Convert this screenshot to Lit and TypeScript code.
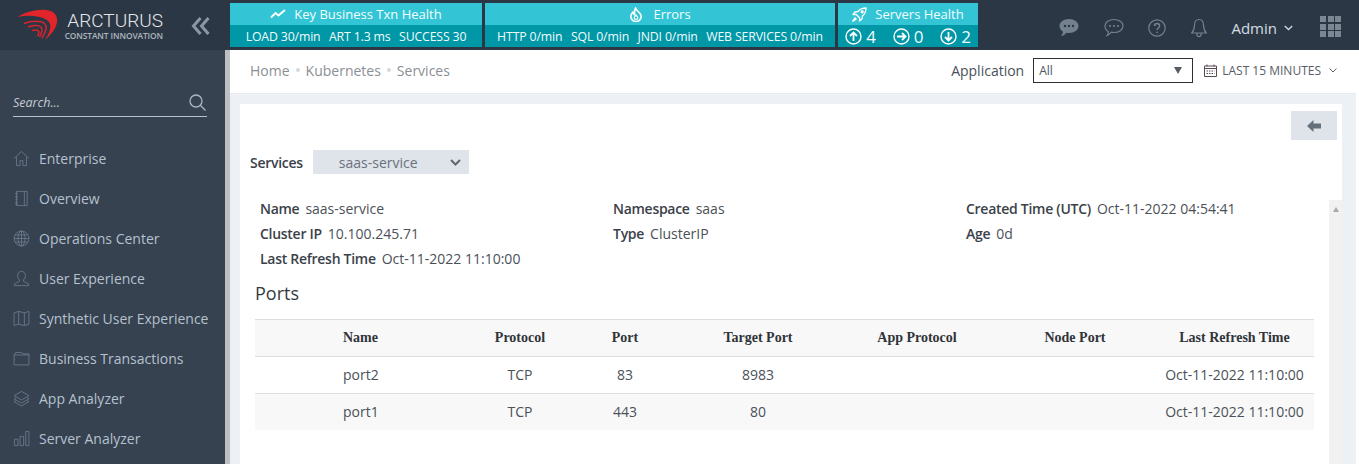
import { LitElement, html, css, svg } from "lit";
import { customElement } from "lit/decorators.js";

const ic = (body: unknown, size = 24, vb = "0 0 24 24") => html`<svg width=${size} height=${size} viewBox=${vb} fill="none" stroke="currentColor" stroke-width="1.2">${body}</svg>`;

const nav: [string, unknown][] = [
  ["Enterprise", svg`<path d="M1.5 12 12 2l10.5 10M5 10v12h5v-7h4v7h5V10"/>`],
  ["Overview", svg`<path d="M5 2h15v20H5zM16 2v20M3 5h4M3 9h4M3 13h4M3 17h4M3 20h4"/>`],
  ["Operations Center", svg`<circle cx="12" cy="12" r="10.5"/><ellipse cx="12" cy="12" rx="5" ry="10.5"/><path d="M12 1.5v21M1.5 12h21M3 7h18M3 17h18"/>`],
  ["User Experience", svg`<path d="M12 2c-3.4 0-5.5 2.4-5.5 5.6 0 3 1.3 5 2.7 6.4v2L2 19.5V22h20v-2.5L14.800 16v-2c1.400-1.400 2.700-3.400 2.700-6.400C17.500 4.400 15.400 2 12 2z"/>`],
  ["Synthetic User Experience", svg`<path d="M1.500 4 8 2l8 2 6.500-2v18L16 22l-8-2-6.500 2zM8 2v18M16 4v18"/>`],
  ["Business Transactions", svg`<path d="M1.500 7V21h21V7zM1.500 7l2-3.500h9L14 5.500h8.500V7M1.500 13h1.500"/>`],
  ["App Analyzer", svg`<path d="M12 2 1.500 8 12 14l10.500-6zM4 11l-2.500 1.500L12 18.500l10.500-6L20 11M4 15l-2.500 1.500L12 22.500l10.500-6L20 15"/>`],
  ["Server Analyzer", svg`<path d="M2 13h5v9H2zM10 9h5v13h-5zM18 2h4.500v20H18z"/>`],
];

const ports = [
  ["port2", "TCP", "83", "8983", "", "", "Oct-11-2022 11:10:00"],
  ["port1", "TCP", "443", "80", "", "", "Oct-11-2022 11:10:00"],
];
const heads = ["Name", "Protocol", "Port", "Target Port", "App Protocol", "Node Port", "Last Refresh Time"];

@customElement("app-root")
export class AppRoot extends LitElement {
  static styles = css`
    :host { display: block; width: 1359px; height: 464px; overflow: hidden; font-family: "Open Sans", sans-serif; color: #3d4650; font-size: 14px; background: #fff; }
    * { box-sizing: border-box; }
    .top { height: 50px; background: #2c3745; display: flex; color: #fff; }
    .brand { width: 230px; display: flex; align-items: center; flex: none; }
    .logo { margin-left: 15px; flex: none; width: 48px; height: 32px; }
    .word { margin-left: 2px; display: flex; flex-direction: column; align-items: flex-end; width: 98px; color: #e4e7ea; }
    .word b { font-family: "Roboto", sans-serif; font-weight: 300; font-size: 19px; line-height: 21px; margin-top: 1px; white-space: nowrap; }
    .word span { font-size: 8.400px; line-height: 10px; white-space: nowrap; font-weight: 600; color: #aeb6bf; letter-spacing: -0.100px; }
    .chev { margin-left: 28px; margin-top: 2px; color: #8b97a5; display: flex; }
    .tiles { display: flex; gap: 3px; padding-top: 3px; }
    .tile { height: 44px; display: flex; flex-direction: column; }
    .t1 { width: 252px; } .t2 { width: 350px; } .t3 { width: 140px; }
    .tt { height: 22px; background: #33c5d5; display: flex; align-items: center; justify-content: center; gap: 8px; font-size: 13px; color: #f4fdfe; }
    .t2 .tt { gap: 10px; }
    .tb { height: 22px; background: #0097a7; display: flex; align-items: center; justify-content: center; gap: 8.500px; font-size: 12.300px; color: #f2fbfc; white-space: nowrap; letter-spacing: -0.150px; }
    .health { gap: 17px; font-size: 17px; }
    .health span { display: flex; align-items: center; gap: 4px; }
    .acts { margin-left: auto; display: flex; align-items: center; color: #73818f; padding: 5px 18px 0 0; }
    .admin { color: #d5dbe2; font-size: 15px; margin: 0 27px 0 0; display: flex; align-items: center; gap: 7px; }
    .waffle { display: grid; grid-template-columns: repeat(3, 6px); gap: 1.500px; margin-top: -2px; }
    .waffle i { width: 6px; height: 6px; background: #7c8794; }
    .i1 { margin-right: 25px; } .i2 { margin-right: 24px; } .i3 { margin-right: 25px; } .i4 { margin-right: 24px; }
    .main { display: flex; height: 414px; }
    .side { width: 225px; flex: none; background: #374250; color: #b4c1cf; }
    .search { margin: 40px 18px 0 13px; height: 27px; border-bottom: 1px solid #b9c2cc; display: flex; align-items: center; justify-content: space-between; font-style: italic; font-size: 12.500px; color: #c4ccd5; padding-bottom: 2px; }
    .search svg { color: #a9b7c6; margin-right: 1px; }
    .navl { margin-top: 21px; display: flex; flex-direction: column; }
    .item { height: 40px; display: flex; align-items: center; gap: 9px; padding-left: 13px; font-size: 14px; white-space: nowrap; }
    .item svg { color: #6b7b8e; flex: none; }
    .gut { width: 5px; background: #bdbfc1; flex: none; }
    .con { flex: 1; min-width: 0; background: #edf0f5; display: flex; flex-direction: column; margin-right: 3px; }
    .crumb { height: 44px; background: #fff; border-bottom: 1px solid #e6e9ee; display: flex; align-items: center; padding: 0 19px 3px 20px; flex: none; }
    .bc { display: flex; align-items: center; gap: 6px; color: #8a8f94; font-size: 14px; }
    .bc i { width: 4px; height: 4px; border-radius: 50%; background: #d5d8dc; }
    .filters { margin-left: auto; display: flex; align-items: center; }
    .filters label { font-size: 14px; color: #4a5059; margin-right: 9px; }
    .sel { width: 160px; height: 25px; border: 1px solid #2d2f33; display: flex; align-items: center; justify-content: space-between; padding: 0 10px 0 5px; font-size: 12px; color: #4d5560; }
    .sel i { width: 0; height: 0; border: 4px solid transparent; border-top: 7px solid #555b63; border-bottom: 0; }
    .range { margin-left: 11px; display: flex; align-items: center; gap: 5px; font-size: 12px; color: #565d66; white-space: nowrap; }
    .card { margin: 10px 14px 0 10px; background: #fff; flex: 1; display: flex; flex-direction: column; position: relative; }
    .tools { height: 36px; display: flex; justify-content: flex-end; padding: 7px 5px 0 0; flex: none; }
    .back { width: 46px; height: 29px; background: #dfe3ea; display: flex; align-items: center; justify-content: center; color: #66707c; }
    .svc { display: flex; align-items: center; gap: 10px; padding: 10px 0 0 10px; height: 34px; flex: none; }
    .svc b { font-weight: 600; font-size: 14px; color: #3b4149; letter-spacing: -0.280px; }
    .dd { width: 156px; height: 24px; background: #dfe3ea; display: flex; align-items: center; justify-content: space-between; padding: 0 8px 0 26px; color: #6a727c; font-size: 14px; }
    .scroll { flex: 1; position: relative; padding: 22px 28px 0 15px; }
    .track { position: absolute; top: 26px; right: 0; bottom: 0; width: 13px; background: #f1f1f1; display: flex; justify-content: center; padding-top: 7px; }
    .track i { width: 0; height: 0; border: 3.500px solid transparent; border-bottom: 5px solid #a9a9a9; border-top: 0; }
    .facts { display: grid; grid-template-columns: 353px 353px 1fr; grid-auto-rows: 25px; padding-left: 5px; }
    .f { display: flex; gap: 6px; align-items: center; white-space: nowrap; color: #4b5158; font-size: 14px; }
    .f b { font-weight: 600; color: #3b4149; letter-spacing: -0.280px; }
    h2 { font-weight: 400; font-size: 18px; line-height: 24px; color: #343a42; margin: 10px 0 0 0; }
    .grid { margin-top: 14px; }
    .row { display: grid; grid-template-columns: 212px 106px 104px 162px 156px 160px 159px; height: 37px; border-top: 1px solid #dedede; align-items: center; text-align: center; font-size: 14px; color: #4b5158; padding-bottom: 2px; }
    .row > :first-child { text-align: left; padding-left: 88px; }
    .row.shade { background: #f8f8f8; }
    .row.head { font-family: "Liberation Serif", serif; font-weight: 700; color: #30343a; font-size: 14px; padding-bottom: 0; }
  `;

  render() {
    return html`
      <div class="top">
        <div class="brand">
          <svg class="logo" viewBox="0 0 48 32">
            <path fill="#e2242b" d="M2.500 8C12 2 28-1.500 37 2.500c8 4.500 7.500 16-7 28.500 6.500-10 7.500-17 1-20.500C24 6.500 12 6 2.500 8z"/>
            <path fill="none" stroke="#d8232a" stroke-width="1.500" d="M9 14.500c8-3 17-3 20.500 0 3.500 3 1 9-2.500 14.500M13 18c6-1.800 11-1.800 13 0 2.500 2.500.5 6.500-1.500 10M17 21.500c3-.8 5.500-.8 6.500.5 1 1.500 0 3.500-1 5"/>
          </svg>
          <div class="word"><b>ARCTURUS</b><span>CONSTANT INNOVATION</span></div>
          <div class="chev"><svg width="20" height="20" viewBox="0 0 20 20" fill="none" stroke="currentColor" stroke-width="3"><path d="M9.500 2 2.500 10l7 8M17.500 2l-7 8 7 8"/></svg></div>
        </div>
        <div class="tiles">
          <div class="tile t1">
            <div class="tt"><svg width="16" height="12" viewBox="0 0 16 12" fill="none" stroke="#fff" stroke-width="2"><path d="M1 9.500 5.500 5l3 2.500L15 2"/></svg><span>Key Business Txn Health</span></div>
            <div class="tb"><span>LOAD 30/min</span><span>ART 1.3 ms</span><span>SUCCESS 30</span></div>
          </div>
          <div class="tile t2">
            <div class="tt"><svg width="14" height="15" viewBox="0 0 14 15" fill="none" stroke="#fff" stroke-width="1.600"><path d="M6.500 1c.5 3 5.700 4.500 5.700 8.300a5.200 5.200 0 0 1-10.400 0C1.800 7.500 2.800 6.200 3.800 5.200c.3 1.500 1 2.200 1.800 2.500C5.300 5 5.500 3 6.500 1z"/><path stroke-width="1.200" d="M7 12.500c-1 0-1.800-.8-1.800-1.700 0-1 1.300-1.800 1.800-2.800.5 1 1.800 1.800 1.800 2.800 0 .9-.8 1.700-1.800 1.700z"/></svg><span>Errors</span></div>
            <div class="tb"><span>HTTP 0/min</span><span>SQL 0/min</span><span>JNDI 0/min</span><span>WEB SERVICES 0/min</span></div>
          </div>
          <div class="tile t3">
            <div class="tt"><svg width="15" height="15" viewBox="0 0 15 15" fill="none" stroke="#fff" stroke-width="1.300" stroke-linejoin="round"><path d="M14 1c-3.500 0-6 1.200-8 3.500L3 5 1 7.500l3-.2 3.700 3.700-.2 3 2.500-2 .5-3C12.800 7 14 4.500 14 1z"/><circle cx="10.200" cy="4.800" r="1" fill="#fff"/><path stroke-width="1.600" d="M3.500 10.500 1 14l3.500-2.500"/></svg><span>Servers Health</span></div>
            <div class="tb health">
              <span><svg width="17" height="17" viewBox="0 0 17 17" fill="none" stroke="#fff" stroke-width="1.400"><circle cx="8.500" cy="8.500" r="7.500"/><path stroke-width="1.800" d="M8.500 13V4.500M5 8l3.500-3.500L12 8"/></svg>4</span>
              <span><svg width="17" height="17" viewBox="0 0 17 17" fill="none" stroke="#fff" stroke-width="1.400"><circle cx="8.500" cy="8.500" r="7.500"/><path stroke-width="1.800" d="M4 8.500h8.500M9 5l3.500 3.500L9 12"/></svg>0</span>
              <span><svg width="17" height="17" viewBox="0 0 17 17" fill="none" stroke="#fff" stroke-width="1.400"><circle cx="8.500" cy="8.500" r="7.500"/><path stroke-width="1.800" d="M8.500 4v8.500M5 9l3.500 3.500L12 9"/></svg>2</span>
            </div>
          </div>
        </div>
        <div class="acts">
          <svg class="i1" width="20" height="19" viewBox="0 0 20 19" fill="currentColor"><path d="M10 1c5.300 0 9.500 3 9.500 7s-4.200 7-9.500 7c-.9 0-1.700-.1-2.500-.3C6 16.300 4 17.700 2 18c1-1.200 1.800-2.600 2-4.200C2 12.500.5 10.400.5 8 .5 4 4.700 1 10 1z"/><g fill="#2c3745"><circle cx="6" cy="8" r="1.200"/><circle cx="10" cy="8" r="1.200"/><circle cx="14" cy="8" r="1.200"/></g></svg>
          <svg class="i2" width="20" height="19" viewBox="0 0 20 19" fill="none" stroke="currentColor" stroke-width="1.200"><path d="M10 1.500c5 0 9 2.800 9 6.500s-4 6.500-9 6.500c-.9 0-1.700-.1-2.500-.3C6 15.800 4.500 17 3 17.500c.8-1 1.300-2.200 1.500-3.800C2.400 12.500 1 10.400 1 8c0-3.700 4-6.500 9-6.500z"/><g fill="currentColor" stroke="none"><circle cx="6" cy="8" r="1.100"/><circle cx="10" cy="8" r="1.100"/><circle cx="14" cy="8" r="1.100"/></g></svg>
          <svg class="i3" width="18" height="18" viewBox="0 0 18 18" fill="none" stroke="currentColor" stroke-width="1.200"><circle cx="9" cy="9" r="8.200"/><path stroke-width="1.500" d="M6.500 7c0-1.500 1-2.500 2.600-2.500S11.600 5.500 11.600 7c0 2-2.500 2-2.500 4"/><circle cx="9.100" cy="13.300" r=".9" fill="currentColor" stroke="none"/></svg>
          <svg class="i4" width="16" height="20" viewBox="0 0 16 20" fill="none" stroke="currentColor" stroke-width="1.200"><path d="M8 1.500c-3 0-4.500 2.500-4.500 5.500 0 4-1 6-2.800 8h14.600c-1.800-2-2.800-4-2.800-8 0-3-1.500-5.500-4.500-5.500zM5.800 15.500c0 2 1 3.200 2.200 3.200s2.200-1.200 2.200-3.200"/></svg>
          <div class="admin">Admin <svg width="9" height="6" viewBox="0 0 9 6" fill="none" stroke="currentColor" stroke-width="1.300"><path d="M.8 1 4.500 4.500 8.200 1"/></svg></div>
          <div class="waffle">${Array.from({ length: 9 }, () => html`<i></i>`)}</div>
        </div>
      </div>
      <div class="main">
        <aside class="side">
          <div class="search"><span>Search...</span>
            <svg width="17" height="17" viewBox="0 0 17 17" fill="none" stroke="currentColor" stroke-width="1.300"><circle cx="7" cy="7" r="6"/><path d="m11.500 11.500 5 5"/></svg>
          </div>
          <nav class="navl">
            ${nav.map(([n, i]) => html`<div class="item">${ic(i, 17)}<span>${n}</span></div>`)}
          </nav>
        </aside>
        <div class="gut"></div>
        <div class="con">
          <div class="crumb">
            <div class="bc"><span>Home</span><i></i><span>Kubernetes</span><i></i><span>Services</span></div>
            <div class="filters">
              <label>Application</label>
              <div class="sel"><span>All</span><i></i></div>
              <div class="range">
                <svg width="13" height="13" viewBox="0 0 13 13" fill="none" stroke="#5a4a55" stroke-width="1"><path d="M.5 2h12v10.500H.5zM.5 4.500h12M3 .5v2M10 .5v2"/><path stroke-dasharray="1.500 1" d="M2.500 7h8M2.500 9.500h8"/></svg>
                LAST 15 MINUTES
                <svg style="margin-left:3px" width="8" height="5" viewBox="0 0 8 5" fill="none" stroke="#666" stroke-width="1"><path d="M.5.500 4 4 7.500.500"/></svg>
              </div>
            </div>
          </div>
          <section class="card">
            <div class="tools"><div class="back"><svg width="14" height="12" viewBox="0 0 14 12" fill="currentColor"><path d="M0 6 6.500 0v3.500H14v5H6.500V12z"/></svg></div></div>
            <div class="svc"><b>Services</b>
              <div class="dd"><span>saas-service</span><svg width="11" height="7" viewBox="0 0 11 7" fill="none" stroke="#5f6771" stroke-width="2"><path d="M1 1l4.500 4.500L10 1"/></svg></div>
            </div>
            <div class="scroll">
              <div class="track"><i></i></div>
              <div class="facts">
                <div class="f"><b>Name</b><span>saas-service</span></div>
                <div class="f"><b>Namespace</b><span>saas</span></div>
                <div class="f"><b>Created Time (UTC)</b><span>Oct-11-2022 04:54:41</span></div>
                <div class="f"><b>Cluster IP</b><span>10.100.245.71</span></div>
                <div class="f"><b>Type</b><span>ClusterIP</span></div>
                <div class="f"><b>Age</b><span>0d</span></div>
                <div class="f"><b>Last Refresh Time</b><span>Oct-11-2022 11:10:00</span></div>
              </div>
              <h2>Ports</h2>
              <div class="grid">
                <div class="row head shade">${heads.map((h) => html`<div>${h}</div>`)}</div>
                ${ports.map((r, i) => html`<div class="row ${i % 2 ? "shade" : ""}">${r.map((c) => html`<div>${c}</div>`)}</div>`)}
              </div>
            </div>
          </section>
        </div>
      </div>
    `;
  }
}
